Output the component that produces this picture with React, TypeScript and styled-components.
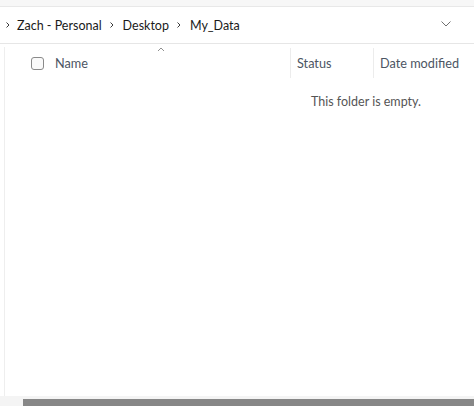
import React from "react";
import styled, { createGlobalStyle } from "styled-components";

const Global = createGlobalStyle`
  html, body { margin: 0; padding: 0; background: #ffffff; }
  body { font-family: Lato, "Noto Sans", sans-serif; width: 474px; height: 406px; overflow: hidden; }
  #root { width: 474px; height: 406px; }
`;

const Window = styled.div`
  width: 474px;
  height: 406px;
  display: flex;
  flex-direction: column;
  background: #fff;
  overflow: hidden;
`;

const TopStrip = styled.div`
  height: 6px;
  flex: none;
  background: #f7f7f7;
  border-bottom: 1px solid #e8e8e8;
`;

const AddressBar = styled.div`
  height: 36px;
  flex: none;
  display: flex;
  align-items: center;
  padding-left: 4px;
  padding-right: 20px;
  border-bottom: 1px solid #e6e6e6;
  font-size: 12.5px;
  color: #1a1a1a;
`;

const Crumb = styled.span`
  white-space: nowrap;
  margin-top: 1px;
`;

const Sep = styled.span<{ $w: number }>`
  display: inline-flex;
  width: ${(p) => p.$w}px;
  justify-content: center;
  align-items: center;
`;

const Spacer = styled.div`
  flex: 1;
`;

const DropBtn = styled.div`
  width: 16px;
  height: 16px;
  display: flex;
  align-items: center;
  justify-content: center;
  margin-top: -2px;
`;

const Body = styled.div`
  flex: 1;
  display: flex;
  flex-direction: column;
  margin-left: 4px;
  border-left: 1px solid #eeeeee;
  margin-top: 3px;
  position: relative;
`;

const HeaderRow = styled.div`
  height: 32px;
  display: flex;
  align-items: center;
  font-size: 12.7px;
  color: #4c5563;
`;

const CheckCell = styled.div`
  width: 50px;
  padding-left: 26px;
  box-sizing: border-box;
  display: flex;
  align-items: center;
`;

const Checkbox = styled.div`
  width: 11px;
  height: 11px;
  border: 1px solid #8a8a8a;
  border-radius: 3px;
  background: #fafafa;
`;

const Col = styled.div<{ $w: number; $divider?: boolean }>`
  width: ${(p) => p.$w}px;
  flex: none;
  height: 30px;
  display: flex;
  align-items: center;
  padding-left: 6px;
  box-sizing: border-box;
  position: relative;
  border-left: ${(p) => (p.$divider ? "1px solid #ececec" : "none")};
  white-space: nowrap;
`;

const NameCol = styled(Col)`
  padding-left: 0;
`;

const SortCaret = styled.span`
  position: absolute;
  left: 102px;
  top: -1px;
  display: flex;
`;

const Empty = styled.div`
  font-size: 12.5px;
  color: #555;
  padding-left: 306px;
  margin-top: 15px;
  white-space: nowrap;
`;

const ScrollTrack = styled.div`
  position: absolute;
  left: -5px;
  right: 0;
  bottom: 0;
  height: 10px;
  background: #f4f4f4;
  display: flex;
  align-items: flex-end;
`;

const ScrollThumb = styled.div`
  margin-left: 23px;
  flex: 1;
  height: 7px;
  background: #878787;
`;

const Chevron = () => (
  <svg width="6" height="8" viewBox="0 0 6 8">
    <path d="M1.5 1.5 L4 4 L1.5 6.5" fill="none" stroke="#3a3a3a" strokeWidth="1" />
  </svg>
);

export default function App() {
  return (
    <>
      <Global />
      <Window>
        <TopStrip />
        <AddressBar>
          <Sep $w={7}>
            <Chevron />
          </Sep>
          <Sep $w={6} />
          <Crumb>Zach - Personal</Crumb>
          <Sep $w={21}>
            <Chevron />
          </Sep>
          <Crumb>Desktop</Crumb>
          <Sep $w={21}>
            <Chevron />
          </Sep>
          <Crumb>My_Data</Crumb>
          <Spacer />
          <DropBtn>
            <svg width="10" height="6" viewBox="0 0 10 6">
              <path d="M0.5 0.5 L5 5 L9.5 0.5" fill="none" stroke="#707070" strokeWidth="1" />
            </svg>
          </DropBtn>
        </AddressBar>
        <Body>
          <HeaderRow>
            <CheckCell>
              <Checkbox />
            </CheckCell>
            <NameCol $w={235}>
              Name
              <SortCaret>
                <svg width="8" height="5" viewBox="0 0 8 5">
                  <path d="M1 4 L4 1 L7 4" fill="none" stroke="#909090" strokeWidth="1" />
                </svg>
              </SortCaret>
            </NameCol>
            <Col $w={83} $divider>
              Status
            </Col>
            <Col $w={100} $divider>
              Date modified
            </Col>
          </HeaderRow>
          <Empty>This folder is empty.</Empty>
          <ScrollTrack>
            <ScrollThumb />
          </ScrollTrack>
        </Body>
      </Window>
    </>
  );
}
